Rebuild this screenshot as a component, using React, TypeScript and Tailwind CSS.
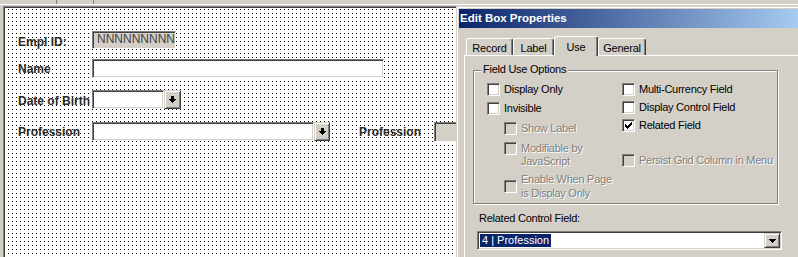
import type { ReactNode } from "react";

// win2000-style bevels
const SUNKEN =
  "border border-t-[#808080] border-l-[#808080] border-b-white border-r-white shadow-[inset_1px_1px_0_#404040,inset_-1px_-1px_0_#d4d0c8]";
const RAISED =
  "border border-t-[#d4d0c8] border-l-[#d4d0c8] border-b-[#404040] border-r-[#404040] shadow-[inset_1px_1px_0_#fff,inset_-1px_-1px_0_#808080]";

function DropArrow() {
  return (
    <svg width="7" height="7" viewBox="0 0 7 7" shapeRendering="crispEdges">
      <rect x="2" y="0" width="3" height="3" fill="#000" />
      <rect x="0" y="3" width="7" height="1" fill="#000" />
      <rect x="1" y="4" width="5" height="1" fill="#000" />
      <rect x="2" y="5" width="3" height="1" fill="#000" />
      <rect x="3" y="6" width="1" height="1" fill="#000" />
    </svg>
  );
}

function SelectArrow() {
  return (
    <svg width="7" height="4" viewBox="0 0 7 4" shapeRendering="crispEdges">
      <rect x="0" y="0" width="7" height="1" fill="#000" />
      <rect x="1" y="1" width="5" height="1" fill="#000" />
      <rect x="2" y="2" width="3" height="1" fill="#000" />
      <rect x="3" y="3" width="1" height="1" fill="#000" />
    </svg>
  );
}

function CheckMark() {
  const rows: [number, number][][] = [
    [[6, 1]],
    [[5, 2]],
    [[0, 1], [4, 3]],
    [[0, 2], [3, 3]],
    [[0, 5]],
    [[1, 3]],
    [[2, 1]],
  ];
  return (
    <svg width="7" height="7" viewBox="0 0 7 7" shapeRendering="crispEdges">
      {rows.map((segs, y) =>
        segs.map(([x, w]) => <rect key={`${y}-${x}`} x={x} y={y} width={w} height="1" fill="#000" />)
      )}
    </svg>
  );
}

function CheckBox({ checked, disabled }: { checked?: boolean; disabled?: boolean }) {
  return (
    <span
      className={`${SUNKEN} w-[13px] h-[13px] shrink-0 flex items-center justify-center ${
        disabled ? "bg-[#d4d0c8]" : "bg-white"
      }`}
    >
      {checked && <CheckMark />}
    </span>
  );
}

function Option({
  children,
  checked,
  disabled,
  center,
  className = "",
}: {
  children: ReactNode;
  checked?: boolean;
  disabled?: boolean;
  center?: boolean;
  className?: string;
}) {
  return (
    <div className={`flex gap-[4px] ${center ? "items-center" : "items-start"} ${className}`}>
      <CheckBox checked={checked} disabled={disabled} />
      <span className={disabled ? "text-[#808080] [text-shadow:1px_1px_0_#fff]" : "text-black"}>
        {children}
      </span>
    </div>
  );
}

function FieldLabel({ children, className = "" }: { children: ReactNode; className?: string }) {
  return (
    <span className={`shrink-0 text-[12px] font-bold text-[#2b2b2b] whitespace-nowrap ${className}`}>
      {children}
    </span>
  );
}

function DesignCanvas() {
  return (
    <div className="w-[456px] shrink-0 h-full pl-[3px] bg-[#d4d0c8]">
      <div className="h-full border-l border-t border-[#808080]">
        <div className="h-full overflow-hidden border-l border-t border-[#404040] bg-white bg-[linear-gradient(to_bottom,transparent_1px,#fff_1px),linear-gradient(to_right,#000_1px,#fff_1px)] bg-size-[4px_4px] bg-position-[3px_1px] pl-[13px] pt-[23px]">
          {/* Empl ID */}
          <div className="flex items-center h-[18px]">
            <FieldLabel className="w-[74px] pt-[3px]">Empl ID:</FieldLabel>
            <div
              className={`${SUNKEN} shrink-0 w-[84px] h-[18px] bg-[#d4d0c8] overflow-hidden whitespace-nowrap text-[12px] leading-[14px] text-[#404040] pl-[4px]`}
            >
              NNNNNNNNNN
            </div>
          </div>

          {/* Name */}
          <div className="flex items-center h-[19px] mt-[10px]">
            <FieldLabel className="w-[74px] pt-[1px]">Name</FieldLabel>
            <div className={`${SUNKEN} shrink-0 w-[292px] h-[19px] bg-white`} />
          </div>

          {/* Date of Birth */}
          <div className="flex items-center h-[19px] mt-[12px]">
            <FieldLabel className="w-[74px] pt-[2px]">Date of Birth</FieldLabel>
            <div className={`${SUNKEN} shrink-0 w-[72px] h-[19px] bg-white`} />
            <div
              className={`${RAISED} shrink-0 w-[17px] h-[19px] bg-[#d4d0c8] flex items-center justify-center`}
            >
              <DropArrow />
            </div>
          </div>

          {/* Profession */}
          <div className="flex items-center h-[19px] mt-[13px]">
            <FieldLabel className="w-[74px] pt-[1px]">Profession</FieldLabel>
            <div
              className={`${SUNKEN} shrink-0 w-[222px] h-[19px] bg-white border-b-black [border-bottom-style:dashed]`}
            />
            <div
              className={`${RAISED} shrink-0 w-[16px] h-[19px] bg-[#d4d0c8] flex items-center justify-center`}
            >
              <DropArrow />
            </div>
            <FieldLabel className="ml-[29px] pt-[1px]">Profession</FieldLabel>
            <div className={`${SUNKEN} shrink-0 ml-[13px] w-[30px] h-[20px] bg-[#d4d0c8]`} />
          </div>
        </div>
      </div>
    </div>
  );
}

const TABS = [
  { name: "Record", w: "w-[47px]" },
  { name: "Label", w: "w-[41px]" },
  { name: "Use", w: "w-[44px]", active: true },
  { name: "General", w: "w-[48px]" },
];

function EditBoxDialog() {
  return (
    <div className="flex-1 min-w-0 h-full overflow-hidden bg-[#d4d0c8] pl-px pt-px">
      <div className="h-full border-l border-t border-white pl-px pt-px">
        {/* title bar */}
        <div className="h-[19px] flex items-center pl-[1px] bg-[linear-gradient(to_right,#0a246a,#a6caf0)]">
          <span className="text-white font-bold text-[11.5px] leading-none">Edit Box Properties</span>
        </div>

        {/* tabs */}
        <div className="mt-[8px] ml-[7px] flex items-end h-[19px] text-[11px] tracking-[-0.2px]">
          {TABS.map((t) =>
            t.active ? (
              <div
                key={t.name}
                className={`${t.w} h-[20px] mb-[-1px] relative z-10 bg-[#d4d0c8] border-l border-t border-r border-white border-r-[#404040] shadow-[inset_-1px_0_0_#808080] rounded-t-[3px] flex justify-center pt-[2px] text-black`}
              >
                {t.name}
              </div>
            ) : (
              <div
                key={t.name}
                className={`${t.w} h-[17px] bg-[#d4d0c8] border-l border-t border-r border-white border-r-[#404040] shadow-[inset_-1px_0_0_#808080] rounded-t-[3px] flex justify-center pt-[1px] text-black`}
              >
                {t.name}
              </div>
            )
          )}
        </div>

        {/* tab panel */}
        <div className="ml-[5px] w-[340px] h-[220px] border-l border-t border-white text-[11px] leading-[13px] tracking-[-0.25px] text-black">
          {/* group box */}
          <div className="relative ml-[8px] mt-[14px] w-[305px] h-[134px] border border-[#808080] shadow-[inset_1px_1px_0_#fff,1px_1px_0_#fff]">
            <span className="absolute left-[7px] top-[-8px] px-[2px] bg-[#d4d0c8]">Field Use Options</span>
            <div className="flex pl-[13px] pt-[12px]">
              <div className="w-[135px] flex flex-col">
                <Option>Display Only</Option>
                <Option className="mt-[6px]">Invisible</Option>
                <Option disabled className="mt-[7px] ml-[17px]">
                  Show Label
                </Option>
                <Option disabled className="mt-[7px] ml-[17px]">
                  Modifiable by
                  <br />
                  JavaScript
                </Option>
                <Option disabled center className="mt-[4px] ml-[17px] leading-[14px]">
                  Enable When Page
                  <br />
                  is Display Only
                </Option>
              </div>
              <div className="flex flex-col">
                <Option>Multi-Currency Field</Option>
                <Option className="mt-[5px]">Display Control Field</Option>
                <Option checked className="mt-[5px]">
                  Related Field
                </Option>
                <Option disabled className="mt-[22px]">
                  Persist Grid Column in Menu
                </Option>
              </div>
            </div>
          </div>

          <div className="ml-[14px] mt-[8px]">Related Control Field:</div>

          <div
            className={`${SUNKEN} ml-[12px] mt-[6px] w-[305px] h-[19px] bg-white flex items-center pl-[2px] pr-[1px]`}
          >
            <span className="bg-[#0a246a] text-white h-[13px] px-[2px] leading-[13px] tracking-normal">
              4 | Profession
            </span>
            <div
              className={`${RAISED} ml-auto w-[16px] h-[15px] bg-[#d4d0c8] flex items-center justify-center`}
            >
              <SelectArrow />
            </div>
          </div>
        </div>
      </div>
    </div>
  );
}

export default function App() {
  return (
    <div className="w-[798px] h-[257px] overflow-hidden bg-[#d4d0c8] flex flex-col font-['Liberation_Sans',Arial,sans-serif]">
      {/* toolbar remnant */}
      <div className="h-[4px] flex shrink-0">
        <div className="w-[57px] border-r border-[#808080]" />
        <div className="w-[37px] border-r border-[#808080]" />
        <div className="flex-1" />
      </div>
      <div className="h-[2px] shrink-0 border-t border-white" />
      <div className="flex flex-1 min-h-0">
        <DesignCanvas />
        <EditBoxDialog />
      </div>
    </div>
  );
}
